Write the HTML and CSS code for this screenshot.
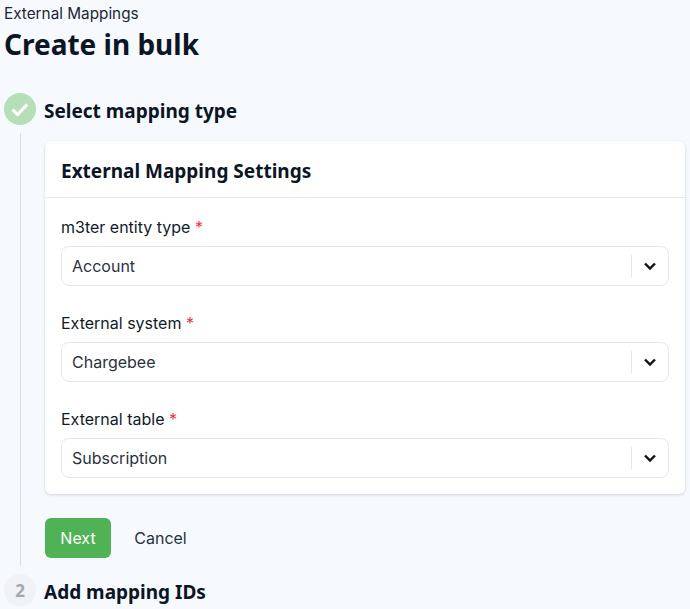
FILE: index.html
```html
<!DOCTYPE html>
<html lang="en">
<head>
  <meta charset="UTF-8">
  <meta name="viewport" content="width=device-width, initial-scale=1.0">
  <title>Create in bulk</title>
  <link rel="stylesheet" href="styles.css">
</head>
<body>
  <div class="page">
    <div class="crumb">External Mappings</div>
    <h1>Create in bulk</h1>

    <div class="step-head">
      <div class="circle done">
        <svg width="18" height="18" viewBox="0 0 18 18"><path d="M1.6 9.6l5 5 9.6-10.2" fill="none" stroke="#fff" stroke-width="3" stroke-linejoin="round"/></svg>
      </div>
      <h2>Select mapping type</h2>
    </div>

    <div class="step-body">
      <div class="card">
        <div class="card-head">External Mapping Settings</div>
        <div class="card-body">
          <div class="field">
            <label>m3ter entity type <span class="req">*</span></label>
            <div class="select">
              <span class="value">Account</span>
              <span class="sep"></span>
              <svg class="chev" width="14" height="10" viewBox="0 0 14 10"><path d="M2 2.5l5 5 5-5" fill="none" stroke="#111" stroke-width="2.4"/></svg>
            </div>
          </div>
          <div class="field">
            <label>External system <span class="req">*</span></label>
            <div class="select">
              <span class="value">Chargebee</span>
              <span class="sep"></span>
              <svg class="chev" width="14" height="10" viewBox="0 0 14 10"><path d="M2 2.5l5 5 5-5" fill="none" stroke="#111" stroke-width="2.4"/></svg>
            </div>
          </div>
          <div class="field">
            <label>External table <span class="req">*</span></label>
            <div class="select">
              <span class="value">Subscription</span>
              <span class="sep"></span>
              <svg class="chev" width="14" height="10" viewBox="0 0 14 10"><path d="M2 2.5l5 5 5-5" fill="none" stroke="#111" stroke-width="2.4"/></svg>
            </div>
          </div>
        </div>
      </div>
      <div class="actions">
        <button class="next">Next</button>
        <button class="cancel">Cancel</button>
      </div>
    </div>

    <div class="step-head last">
      <div class="circle todo">2</div>
      <h2>Add mapping IDs</h2>
    </div>
  </div>
</body>
</html>
```

FILE: styles.css
```css
html, body {
  height: 100%;
}
body {
  margin: 0;
  background-color: #f6f9fd;
  color: #0b1526;
  font-family: "Inter", sans-serif;
  overflow: hidden;
}
.page {
  padding: 5px 5px 0 4px;
}
.crumb {
  font-size: 15.3px;
  line-height: 18px;
  color: #1c2636;
}
h1 {
  margin: 2px 0 0 0;
  font-family: "Noto Sans", sans-serif;
  font-size: 28px;
  line-height: 38px;
  font-weight: 700;
}
.step-head {
  display: flex;
  align-items: center;
  gap: 8px;
  margin-top: 30px;
}
.step-head h2 {
  margin: 4px 0 0 0;
  font-family: "Noto Sans", sans-serif;
  font-size: 19px;
  line-height: 28px;
  font-weight: 700;
}
.step-head.last {
  margin-top: 8px;
}
.circle {
  width: 32px;
  height: 32px;
  border-radius: 50%;
  display: flex;
  align-items: center;
  justify-content: center;
}
.done {
  background-color: #b5dfb7;
}
.todo {
  background-color: #f0f2f5;
  color: #a3a8b0;
  font-family: "Noto Sans", sans-serif;
  font-weight: 700;
  font-size: 17px;
}
.step-body {
  margin: 8px 0 0 16px;
  padding: 8px 0 8px 24px;
  border-left: 1px solid #d8dfe8;
}
.card {
  background-color: #fff;
  border-radius: 6px;
  box-shadow: 0 1px 3px rgba(30, 50, 80, 0.18);
}
.card-head {
  padding: 4px 16px 0;
  height: 52px;
  display: flex;
  align-items: center;
  font-family: "Noto Sans", sans-serif;
  font-size: 19px;
  font-weight: 700;
  border-bottom: 1px solid #e3e8f0;
}
.card-body {
  padding: 16px;
  display: flex;
  flex-direction: column;
  gap: 24px;
}
.field label {
  display: block;
  font-size: 16px;
  line-height: 24px;
  padding-top: 1px;
  margin-bottom: 7px;
  color: #111b2b;
}
.req {
  color: #e8373f;
}
.select {
  display: flex;
  align-items: center;
  height: 40px;
  box-sizing: border-box;
  border: 1px solid #e3e8f0;
  border-radius: 8px;
  padding: 0 11px 0 10px;
}
.value {
  flex: 1;
  font-size: 16px;
  color: #2a3240;
}
.sep {
  width: 1px;
  height: 22px;
  background-color: #e3e8f0;
  margin-right: 11px;
}
.actions {
  display: flex;
  align-items: center;
  gap: 8px;
  margin-top: 24px;
}
button {
  font-family: "Inter", sans-serif;
  font-size: 16px;
  height: 40px;
  border: none;
  border-radius: 6px;
  cursor: pointer;
}
.next {
  width: 66px;
  background-color: #4fb254;
  color: #fff;
}
.cancel {
  width: 83px;
  background: none;
  color: #2a3240;
}
```
